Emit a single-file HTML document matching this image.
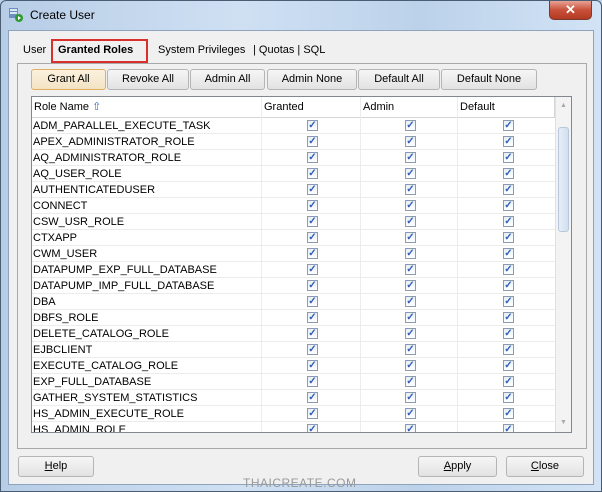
<!DOCTYPE html>
<html><head><style>
*{box-sizing:border-box;margin:0;padding:0}
body{width:602px;height:492px;overflow:hidden;font-family:"Liberation Sans",sans-serif;font-size:11px;color:#000;background:#bcd3ea;position:relative}
.frame{position:absolute;left:0;top:0;width:602px;height:492px;border:1px solid #4a5d73;border-radius:6px 6px 0 0;background:linear-gradient(90deg,#b7cde6,#cfe0f3 40%,#bcd2ea 70%,#d2e3f5)}
.title{position:absolute;left:30px;top:8px;font-size:12px}
.icon{position:absolute;left:9px;top:8px;width:14px;height:14px}
.xbtn{position:absolute;left:549px;top:1px;width:43px;height:19px;border:1px solid #7a3a30;border-top:none;border-radius:0 0 5px 5px;background:linear-gradient(#e8a294,#c9503a 50%,#b23a22);color:#fff;font-weight:bold;text-align:center;font-size:13px;line-height:18px}
.client{position:absolute;left:8px;top:30px;width:586px;height:455px;background:#f0f0f0;border:1px solid #8ea4bd}
.tab{position:absolute;top:44px;font-size:11px}
.panel{position:absolute;left:17px;top:63px;width:570px;height:386px;border:1px solid #a9a9a9;background:#f0f0f0}
.btn{position:absolute;height:21px;border:1px solid #b5b5b5;border-radius:3px;background:linear-gradient(#f6f6f6,#e2e2e2);text-align:center;line-height:19px}
.table{position:absolute;left:31px;top:96px;width:541px;height:337px;border:1px solid #828790;background:#fff;overflow:hidden}
.hdr{position:absolute;top:0;height:21px;border-right:1px solid #d5d5d5;border-bottom:1px solid #d5d5d5;line-height:21px;padding-left:2px;background:#fff}
.row{position:absolute;left:0;width:523px;height:16px;border-bottom:1px solid #ececec}
.row span{position:absolute;left:1px;top:1px;line-height:14px}
.cb{position:absolute;top:2px;width:11px;height:11px;border:1px solid #8a9bb0;background:linear-gradient(#e8eef6,#fff);color:#2d5fb6;font-size:10px;line-height:9px;text-align:center;font-weight:bold}
.vl{position:absolute;top:0;width:1px;height:337px;background:#ececec}
.sb{position:absolute;left:523px;top:0;width:16px;height:335px;background:#f3f3f3;border-left:1px solid #e0e0e0}
</style></head><body>
<div class="frame"></div>
<svg class="icon" viewBox="0 0 14 14"><rect x="0" y="0" width="9" height="10" fill="#6a8fc0"/><rect x="1" y="1" width="7" height="2" fill="#dbe6f3"/><rect x="1" y="4" width="7" height="2" fill="#dbe6f3"/><circle cx="10" cy="10" r="4" fill="#2f9a2f"/><path d="M9 8l3 2-3 2z" fill="#fff"/></svg>
<div class="title">Create User</div>
<div class="xbtn">✕</div>
<div class="client"></div>
<div class="tab" style="left:23px">User</div>
<div style="position:absolute;left:51px;top:39px;width:97px;height:24px;border:2px solid #d9302c;background:#f0f0f0"></div>
<div class="tab" style="left:58px;font-weight:bold">Granted Roles</div>
<div class="tab" style="left:158px">System Privileges</div>
<div class="tab" style="left:253px">|&nbsp;Quotas&nbsp;|&nbsp;SQL</div>
<div class="panel"></div>
<div class="btn" style="left:31px;top:69px;width:75px;border-color:#e0b060;background:linear-gradient(#fbf1de,#f3e3c3)">Grant All</div>
<div class="btn" style="left:107px;top:69px;width:82px">Revoke All</div>
<div class="btn" style="left:190px;top:69px;width:75px">Admin All</div>
<div class="btn" style="left:267px;top:69px;width:90px">Admin None</div>
<div class="btn" style="left:358px;top:69px;width:82px">Default All</div>
<div class="btn" style="left:441px;top:69px;width:96px">Default None</div>
<div class="table">
<div class="hdr" style="left:0;width:230px">Role Name <span style="color:#2a6bd0">⇧</span></div>
<div class="hdr" style="left:230px;width:99px">Granted</div>
<div class="hdr" style="left:329px;width:97px">Admin</div>
<div class="hdr" style="left:426px;width:97px">Default</div>
<div class="vl" style="left:229px"></div><div class="vl" style="left:328px"></div><div class="vl" style="left:425px"></div>
<div id="rows"></div>
<div class="sb"><div style="position:absolute;left:2px;top:30px;width:11px;height:105px;border:1px solid #b8c8da;border-radius:3px;background:linear-gradient(90deg,#e6eef8,#d2dff0)"></div><div style="position:absolute;left:4px;top:5px;color:#aaa;font-size:7px">▲</div><div style="position:absolute;left:4px;top:322px;color:#aaa;font-size:7px">▼</div></div>
</div>
<div class="btn" style="left:18px;top:456px;width:76px;height:21px"><u>H</u>elp</div>
<div class="btn" style="left:418px;top:456px;width:79px;height:21px"><u>A</u>pply</div>
<div class="btn" style="left:506px;top:456px;width:78px;height:21px"><u>C</u>lose</div>
<div style="position:absolute;left:243px;top:476px;color:#999;font-size:12px;letter-spacing:0.5px">THAICREATE.COM</div>
<script>
var n=["ADM_PARALLEL_EXECUTE_TASK","APEX_ADMINISTRATOR_ROLE","AQ_ADMINISTRATOR_ROLE","AQ_USER_ROLE","AUTHENTICATEDUSER","CONNECT","CSW_USR_ROLE","CTXAPP","CWM_USER","DATAPUMP_EXP_FULL_DATABASE","DATAPUMP_IMP_FULL_DATABASE","DBA","DBFS_ROLE","DELETE_CATALOG_ROLE","EJBCLIENT","EXECUTE_CATALOG_ROLE","EXP_FULL_DATABASE","GATHER_SYSTEM_STATISTICS","HS_ADMIN_EXECUTE_ROLE","HS_ADMIN_ROLE"];
var h="";n.forEach(function(s,i){h+='<div class="row" style="top:'+(21+16*i)+'px"><span>'+s+'</span><div class="cb" style="left:275px">✓</div><div class="cb" style="left:373px">✓</div><div class="cb" style="left:471px">✓</div></div>';});
document.getElementById("rows").innerHTML=h;
</script>
</body></html>
